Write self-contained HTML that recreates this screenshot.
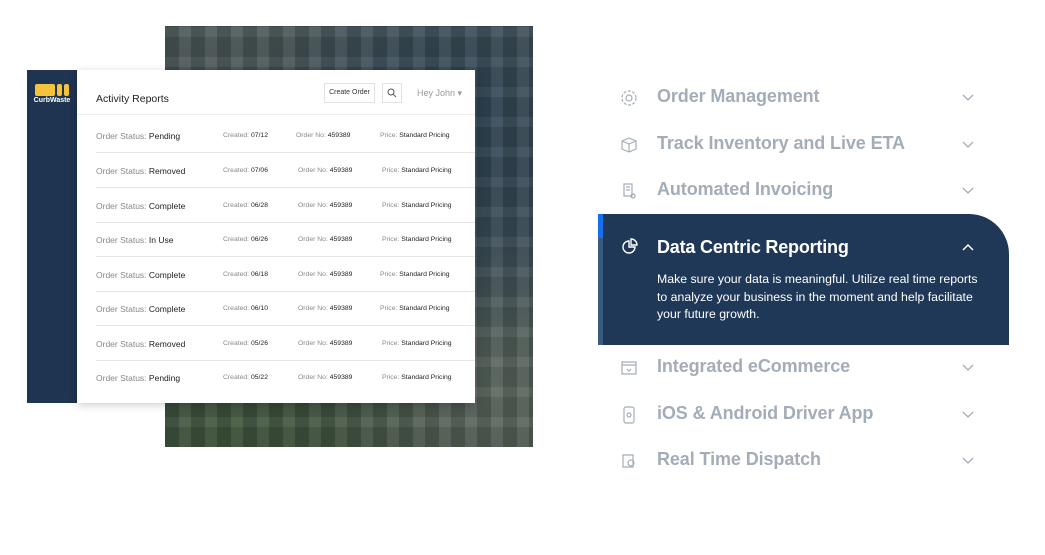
<!DOCTYPE html>
<html><head><style>
*{margin:0;padding:0;box-sizing:border-box}
body{width:1045px;height:555px;background:#fff;position:relative;overflow:hidden;font-family:"Liberation Sans",sans-serif}
.photo{position:absolute;left:165px;top:26px;width:368px;height:421px;background:
radial-gradient(ellipse at 80% 20%,rgba(30,60,90,.6),transparent 50%),
radial-gradient(ellipse at 20% 90%,rgba(60,90,50,.6),transparent 50%),
radial-gradient(ellipse at 90% 85%,rgba(120,130,120,.5),transparent 40%),
linear-gradient(180deg,#505a5a,#3e4c55 50%,#4a5548);}
.photo:after{content:"";position:absolute;inset:0;background:repeating-linear-gradient(90deg,rgba(20,30,30,.18) 0 14px,rgba(170,175,170,.08) 14px 26px),repeating-linear-gradient(0deg,rgba(20,30,30,.12) 0 20px,rgba(170,175,170,.07) 20px 30px)}
.side{position:absolute;left:27px;top:70px;width:50px;height:333px;background:#1f3450}
.logo{position:absolute;left:8px;top:14px;width:34px;height:12px}
.logo i{position:absolute;top:0;height:12px;background:#f5c33b;border-radius:2px}
.side span{position:absolute;left:0;width:50px;top:27px;font-size:7px;color:#fff;text-align:center;font-weight:bold}
.card{position:absolute;left:77px;top:70px;width:398px;height:333px;background:#fff;box-shadow:0 2px 8px rgba(0,0,0,.2)}
.title{position:absolute;left:19px;top:23px;font-size:10.5px;color:#222}
.btn{position:absolute;top:13px;height:20px;border:1px solid #e2e2e2;font-size:7px;color:#333;line-height:18px;text-align:center}
.hey{position:absolute;left:340px;top:18px;font-size:9px;color:#999}
.hline{position:absolute;left:0;right:0;top:44px;border-top:1px solid #eee}
.row{position:absolute;left:19px;width:379px;height:35px;border-bottom:1px solid #e6e6e6;font-size:8.5px;color:#888}
.row b{font-weight:normal;color:#222}
.row span{position:absolute;top:13px}
.row .s{font-size:6.8px;top:14px}
.item{position:absolute;left:620px;width:360px;height:24px}
.item .t{position:absolute;left:37px;top:0;font-size:18px;font-weight:bold;color:#a3adb8;letter-spacing:-.1px}
.item svg.ic{position:absolute;left:0;top:3px}
.item svg.chev{position:absolute;left:342px;top:8px}
.panel{position:absolute;left:598px;top:214px;width:411px;height:131px;background:#1f3857;border-top-right-radius:40px}
.strip{position:absolute;left:0;top:0;width:5px;height:131px;background:#3a5a80}
.strip:before{content:"";position:absolute;left:0;top:0;width:5px;height:24px;background:#1570ef}
.panel .t{position:absolute;left:59px;top:23px;font-size:18px;font-weight:bold;color:#fff;letter-spacing:-.2px}
.panel p{position:absolute;left:59px;top:57px;width:330px;font-size:12.3px;line-height:17.5px;color:#fff}
</style></head><body>
<div class="photo"></div>
<div class="side"><div class="logo"><i style="left:0;width:20px"></i><i style="left:22px;width:5px"></i><i style="left:29px;width:5px"></i></div><span>CurbWaste</span></div>
<div class="card">
<div class="title">Activity Reports</div>
<div class="btn" style="left:247px;width:51px">Create Order</div>
<div class="btn" style="left:305px;width:20px"><svg width="10" height="10" viewBox="0 0 10 10" style="margin-top:4px" fill="none" stroke="#555" stroke-width="1"><circle cx="4" cy="4" r="3"/><path d="M6.2 6.2L9 9"/></svg></div>
<div class="hey">Hey John ▾</div>
<div class="hline"></div>
<div class="row" style="top:48px"><span>Order Status: <b>Pending</b></span><span class="s" style="left:127px">Created: <b>07/12</b></span><span class="s" style="left:200px">Order No: <b>459389</b></span><span class="s" style="left:284px">Price: <b>Standard Pricing</b></span></div>
<div class="row" style="top:83px"><span>Order Status: <b>Removed</b></span><span class="s" style="left:127px">Created: <b>07/06</b></span><span class="s" style="left:202px">Order No: <b>459389</b></span><span class="s" style="left:286px">Price: <b>Standard Pricing</b></span></div>
<div class="row" style="top:118px"><span>Order Status: <b>Complete</b></span><span class="s" style="left:127px">Created: <b>06/28</b></span><span class="s" style="left:202px">Order No: <b>459389</b></span><span class="s" style="left:286px">Price: <b>Standard Pricing</b></span></div>
<div class="row" style="top:152px"><span>Order Status: <b>In Use</b></span><span class="s" style="left:127px">Created: <b>06/26</b></span><span class="s" style="left:202px">Order No: <b>459389</b></span><span class="s" style="left:286px">Price: <b>Standard Pricing</b></span></div>
<div class="row" style="top:187px"><span>Order Status: <b>Complete</b></span><span class="s" style="left:127px">Created: <b>06/18</b></span><span class="s" style="left:202px">Order No: <b>459389</b></span><span class="s" style="left:284px">Price: <b>Standard Pricing</b></span></div>
<div class="row" style="top:221px"><span>Order Status: <b>Complete</b></span><span class="s" style="left:127px">Created: <b>06/10</b></span><span class="s" style="left:202px">Order No: <b>459389</b></span><span class="s" style="left:284px">Price: <b>Standard Pricing</b></span></div>
<div class="row" style="top:256px"><span>Order Status: <b>Removed</b></span><span class="s" style="left:127px">Created: <b>05/26</b></span><span class="s" style="left:202px">Order No: <b>459389</b></span><span class="s" style="left:286px">Price: <b>Standard Pricing</b></span></div>
<div class="row" style="top:290px;border:none"><span>Order Status: <b>Pending</b></span><span class="s" style="left:127px">Created: <b>05/22</b></span><span class="s" style="left:202px">Order No: <b>459389</b></span><span class="s" style="left:286px">Price: <b>Standard Pricing</b></span></div>
</div>

<div class="item" style="top:86px"><svg class="ic" width="18" height="18" viewBox="0 0 18 18" fill="none" stroke="#a3adb8" stroke-width="1.2"><circle cx="9" cy="9" r="3"/><circle cx="9" cy="9" r="7" stroke-dasharray="3 1.5"/></svg><div class="t">Order Management</div><svg class="chev" width="12" height="8"><path d="M1 1l5 5 5-5" fill="none" stroke="#a3adb8" stroke-width="1.3"/></svg></div>
<div class="item" style="top:133px"><svg class="ic" width="18" height="18" viewBox="0 0 18 18" fill="none" stroke="#a3adb8" stroke-width="1.2"><path d="M2 5l7-3 7 3v8l-7 3-7-3z M2 5l7 3 7-3 M9 8v8"/></svg><div class="t">Track Inventory and Live ETA</div><svg class="chev" width="12" height="8"><path d="M1 1l5 5 5-5" fill="none" stroke="#a3adb8" stroke-width="1.3"/></svg></div>
<div class="item" style="top:179px"><svg class="ic" width="18" height="18" viewBox="0 0 18 18" fill="none" stroke="#a3adb8" stroke-width="1.2"><path d="M4 2h8v12H4z M6 5h4 M6 8h4"/><circle cx="13" cy="14" r="2"/></svg><div class="t">Automated Invoicing</div><svg class="chev" width="12" height="8"><path d="M1 1l5 5 5-5" fill="none" stroke="#a3adb8" stroke-width="1.3"/></svg></div>
<div class="panel"><div class="strip"></div>
<svg style="position:absolute;left:23px;top:24px" width="18" height="18" viewBox="0 0 18 18" fill="none" stroke="#fff" stroke-width="1.4"><path d="M8 3a6 6 0 1 0 6 6H8z M10 1v6h6a6 6 0 0 0-6-6z"/></svg>
<div class="t">Data Centric Reporting</div>
<svg style="position:absolute;left:364px;top:29px" width="12" height="8"><path d="M1 7l5-5 5 5" fill="none" stroke="#fff" stroke-width="1.5"/></svg>
<p>Make sure your data is meaningful. Utilize real time reports to analyze your business in the moment and help facilitate your future growth.</p></div>
<div class="item" style="top:356px"><svg class="ic" width="18" height="18" viewBox="0 0 18 18" fill="none" stroke="#a3adb8" stroke-width="1.2"><path d="M2 3h14v12H2z M2 6h14 M7 10l2 2 2-2"/></svg><div class="t">Integrated eCommerce</div><svg class="chev" width="12" height="8"><path d="M1 1l5 5 5-5" fill="none" stroke="#a3adb8" stroke-width="1.3"/></svg></div>
<div class="item" style="top:403px"><svg class="ic" width="18" height="18" viewBox="0 0 18 18" fill="none" stroke="#a3adb8" stroke-width="1.2"><rect x="4" y="1" width="10" height="16" rx="2"/><circle cx="9" cy="9" r="2"/></svg><div class="t">iOS &amp; Android Driver App</div><svg class="chev" width="12" height="8"><path d="M1 1l5 5 5-5" fill="none" stroke="#a3adb8" stroke-width="1.3"/></svg></div>
<div class="item" style="top:449px"><svg class="ic" width="18" height="18" viewBox="0 0 18 18" fill="none" stroke="#a3adb8" stroke-width="1.2"><path d="M3 3h10v12H3z"/><circle cx="11" cy="11" r="3"/></svg><div class="t">Real Time Dispatch</div><svg class="chev" width="12" height="8"><path d="M1 1l5 5 5-5" fill="none" stroke="#a3adb8" stroke-width="1.3"/></svg></div>
</body></html>
